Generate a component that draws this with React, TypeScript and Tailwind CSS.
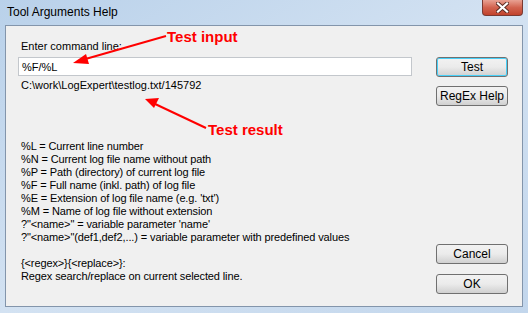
export default function App() {
  const helpLines = [
    "%L = Current line number",
    "%N = Current log file name without path",
    "%P = Path (directory) of current log file",
    "%F = Full name (inkl. path) of log file",
    "%E = Extension of log file name (e.g. 'txt')",
    "%M = Name of log file without extension",
    '?"<name>" = variable parameter \'name\'',
    '?"<name>"(def1,def2,...) = variable parameter with predefined values',
  ];

  const btn =
    "flex h-[20px] w-[72px] items-center justify-center rounded-[3px] border border-[#707070] bg-gradient-to-b from-[#f2f2f2] via-[#ebebeb] to-[#d0d0d0] text-[12px] text-black";

  return (
    <div
      className="relative flex h-[313px] w-[528px] flex-col overflow-hidden bg-gradient-to-br from-[#b9d1ea] via-[#d3e2f2] to-[#c2d6ec]"
      style={{ fontFamily: '"Liberation Sans", Arial, sans-serif' }}
    >
      {/* title bar */}
      <div className="flex h-[25px] shrink-0 items-start justify-between pl-[7px] pr-[5px]">
        <span className="mt-[4px] text-[12px] leading-[16px] text-black">Tool Arguments Help</span>
        <div className="flex h-[16px] w-[41px] items-center justify-center rounded-b-[4px] border border-t-0 border-[#7a3a32] bg-gradient-to-b from-[#e8a193] via-[#d2634f] to-[#c1422c]">
          <svg width="13" height="11" viewBox="0 0 13 11">
            <path d="M2 1.5 L11 9.5 M11 1.5 L2 9.5" stroke="#5a2a22" strokeWidth="4" strokeLinecap="square" />
            <path d="M2 1.5 L11 9.5 M11 1.5 L2 9.5" stroke="#ffffff" strokeWidth="2.2" strokeLinecap="square" />
          </svg>
        </div>
      </div>

      {/* client area */}
      <div className="mx-[5px] mb-[6px] flex flex-1 border border-[#8395ab] bg-[#f0f0f0] text-[11px] leading-[13px] text-black">
        <div className="flex flex-1 flex-col pl-[12px] pt-[14px]">
          <span className="ml-[3px]">Enter command line:</span>
          <div className="mt-[4px] flex h-[19px] w-[394px] items-center border border-[#c3c7cc] bg-white px-[3px] pt-[1px]">
            %F/%L
          </div>
          <span className="ml-[3px] mt-[3px]">C:\work\LogExpert\testlog.txt/145792</span>

          <div className="ml-[3px] mt-[48px] flex flex-col tracking-[-0.12px]">
            {helpLines.map((l) => (
              <span key={l}>{l}</span>
            ))}
            <span className="mt-[13px]">{"{<regex>}{<replace>}:"}</span>
            <span>Regex search/replace on current selected line.</span>
          </div>
        </div>

        <div className="flex w-[86px] flex-col pt-[31px]">
          <button className={`${btn} border-[#3c7fb1] shadow-[inset_0_0_0_1px_#48d0f8]`}>Test</button>
          <button className={`${btn} mt-[9px] h-[18px]`}>RegEx Help</button>
          <div className="flex-1" />
          <button className={`${btn} mb-[10px]`}>Cancel</button>
          <button className={`${btn} mb-[12px]`}>OK</button>
        </div>
      </div>

      {/* annotations */}
      <svg className="pointer-events-none absolute left-0 top-0" width="528" height="313">
        <line x1="166" y1="36" x2="82" y2="60" stroke="#ff0000" strokeWidth="2" />
        <polygon points="73,63 86,54 89,64" fill="#ff0000" />
        <line x1="206" y1="128" x2="153" y2="103" stroke="#ff0000" strokeWidth="2" />
        <polygon points="145,99 159,98 154,108" fill="#ff0000" />
      </svg>
      <span className="absolute left-[167px] top-[28px] text-[15px] font-bold leading-[17px] text-[#ff0000]">
        Test input
      </span>
      <span className="absolute left-[208px] top-[121px] text-[15px] font-bold leading-[17px] text-[#ff0000]">
        Test result
      </span>
    </div>
  );
}
